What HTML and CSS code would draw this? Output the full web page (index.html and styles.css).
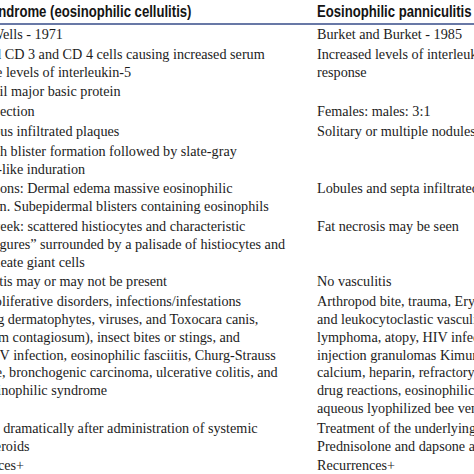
FILE: index.html
```html
<!DOCTYPE html>
<html lang="en">
<head>
<meta charset="utf-8">
<title>Wells syndrome vs eosinophilic panniculitis</title>
<link rel="stylesheet" href="styles.css">
</head>
<body>
<div class="table">
  <div class="row head">
    <div class="cell"><span class="hd">Wells syndrome (eosinophilic cellulitis)</span></div>
    <div class="cell"><span class="hd">Eosinophilic panniculitis</span></div>
  </div>
  <div class="rule"></div>
  <div class="row">
    <div class="cell"><span class="ln">George Wells - 1971</span></div>
    <div class="cell"><span class="ln">Burket and Burket - 1985</span></div>
  </div>
  <div class="row">
    <div class="cell"><span class="ln">Activated CD 3 and CD 4 cells causing increased serum</span><span class="ln">and tissue levels of interleukin-5</span></div>
    <div class="cell"><span class="ln">Increased levels of interleukin-5, Th2</span><span class="ln">response</span></div>
  </div>
  <div class="row">
    <div class="cell"><span class="ln">Eosinophil major basic protein</span></div>
    <div class="cell"></div>
  </div>
  <div class="row">
    <div class="cell"><span class="ln">No predilection</span></div>
    <div class="cell"><span class="ln">Females: males: 3:1</span></div>
  </div>
  <div class="row">
    <div class="cell"><span class="ln">Œdematous infiltrated plaques</span></div>
    <div class="cell"><span class="ln">Solitary or multiple nodules</span></div>
  </div>
  <div class="row">
    <div class="cell"><span class="ln">Often with blister formation followed by slate-gray</span><span class="ln">Morphea-like induration</span></div>
    <div class="cell"></div>
  </div>
  <div class="row">
    <div class="cell"><span class="ln">Early lesions: Dermal edema massive eosinophilic</span><span class="ln">infiltration. Subepidermal blisters containing eosinophils</span></div>
    <div class="cell"><span class="ln">Lobules and septa infiltrated</span></div>
  </div>
  <div class="row">
    <div class="cell"><span class="ln">After 1 week: scattered histiocytes and characteristic</span><span class="ln">"Flame figures” surrounded by a palisade of histiocytes and</span><span class="ln">multinucleate giant cells</span></div>
    <div class="cell"><span class="ln">Fat necrosis may be seen</span></div>
  </div>
  <div class="row">
    <div class="cell"><span class="ln">A vasculitis may or may not be present</span></div>
    <div class="cell"><span class="ln">No vasculitis</span></div>
  </div>
  <div class="row">
    <div class="cell"><span class="ln">Myeloproliferative disorders, infections/infestations</span><span class="ln">(including dermatophytes, viruses, and Toxocara canis,</span><span class="ln">molluscum contagiosum), insect bites or stings, and</span><span class="ln">drugs, HIV infection, eosinophilic fasciitis, Churg-Strauss</span><span class="ln">syndrome, bronchogenic carcinoma, ulcerative colitis, and</span><span class="ln">hypereosinophilic syndrome</span></div>
    <div class="cell"><span class="ln">Arthropod bite, trauma, Erythema nodosum</span><span class="ln">and leukocytoclastic vasculitis, Hodgkin</span><span class="ln">lymphoma, atopy, HIV infection, vaccine</span><span class="ln">injection granulomas Kimura disease,</span><span class="ln">calcium, heparin, refractory anemia,</span><span class="ln">drug reactions, eosinophilic fasciitis,</span><span class="ln">aqueous lyophilized bee venom</span></div>
  </div>
  <div class="row">
    <div class="cell"><span class="ln">Improves dramatically after administration of systemic</span><span class="ln">corticosteroids</span></div>
    <div class="cell"><span class="ln">Treatment of the underlying disease</span><span class="ln">Prednisolone and dapsone are used</span></div>
  </div>
  <div class="row">
    <div class="cell"><span class="ln">Recurrences+</span></div>
    <div class="cell"><span class="ln">Recurrences+</span></div>
  </div>
</div>
</body>
</html>
```
FILE: styles.css
```css
html, body {
  margin: 0;
  padding: 0;
  overflow: hidden;
  background: #ffffff;
}

.table {
  margin-left: -54px;
  width: 760px;
  font-family: "Liberation Serif", "Times New Roman", serif;
  font-size: 14.2px;
  line-height: 17.8px;
  color: #1c1c1c;
  font-variant-ligatures: no-common-ligatures;
}

.row {
  display: grid;
  grid-template-columns: 371px 1fr;
  padding: 1px 0;
}

.cell {
  min-width: 0;
}

.ln {
  display: block;
  white-space: nowrap;
}

.head {
  padding: 3px 0 2px;
  line-height: 18px;
}

.hd {
  display: inline-block;
  white-space: nowrap;
  font-family: "Liberation Sans", Arial, sans-serif;
  font-weight: 700;
  font-size: 16px;
  color: #141414;
  transform: scaleX(0.82);
  transform-origin: left center;
}

.rule {
  height: 2px;
  background: #6878a6;
}
```
